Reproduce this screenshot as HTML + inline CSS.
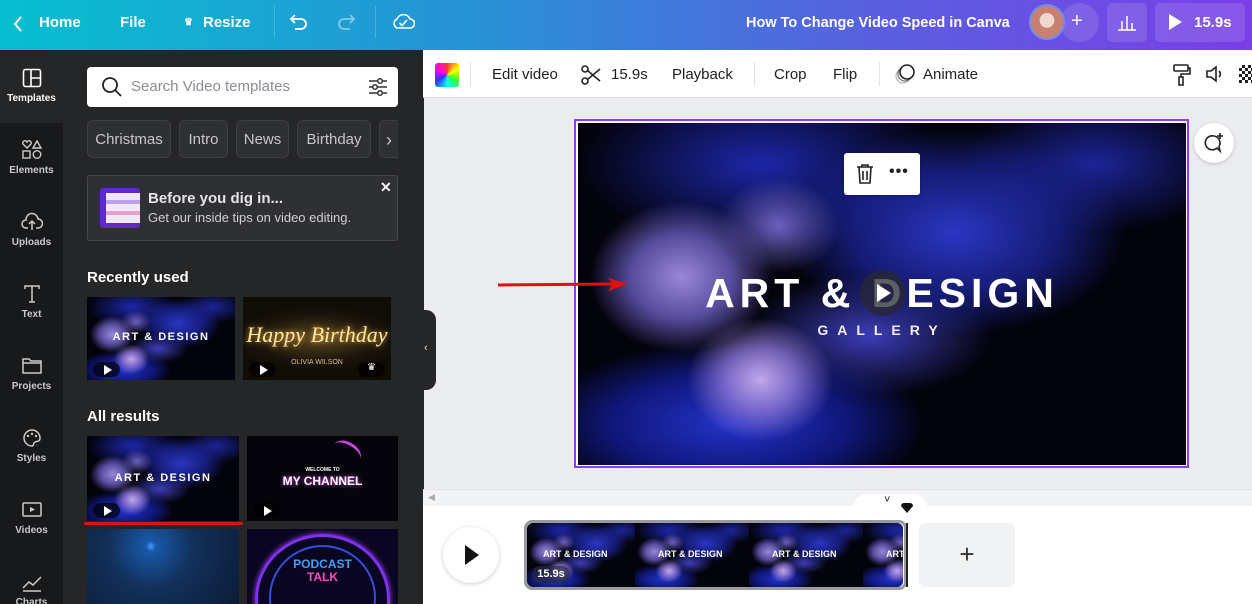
<!DOCTYPE html>
<html><head><meta charset="utf-8"><style>
*{box-sizing:border-box;margin:0;padding:0}
html,body{width:1252px;height:604px;overflow:hidden}
body{font-family:"Liberation Sans",sans-serif;background:#ebecf0;position:relative}
#w{position:absolute;left:0;top:0;width:1252px;height:604px;overflow:hidden}
.a{position:absolute}
.top{left:0;top:0;width:1252px;height:50px;background:linear-gradient(90deg,#06bfcf 0%,#2a8fd6 40%,#5a5fe0 70%,#7a3ee6 100%);color:#fff;font-weight:bold;font-size:15px}
.top span{position:absolute;top:14px}
.smoke{background:
radial-gradient(ellipse 12% 18% at 30% 75%,#c0a8ea 0%,rgba(150,125,220,.75) 50%,transparent 100%),
radial-gradient(ellipse 15% 22% at 17% 45%,#9a88d8 0%,rgba(115,100,205,.75) 55%,transparent 100%),
radial-gradient(ellipse 10% 14% at 33% 30%,#6c60c0 0%,transparent 100%),
radial-gradient(ellipse 28% 30% at 62% 32%,#2a36c4 0%,rgba(30,40,170,.65) 60%,transparent 100%),
radial-gradient(ellipse 32% 24% at 25% 88%,#2232c8 0%,rgba(20,30,160,.75) 60%,transparent 100%),
radial-gradient(ellipse 30% 25% at 30% 12%,#1c26a8 0%,transparent 100%),
radial-gradient(ellipse 22% 20% at 85% 12%,#1c2498 0%,transparent 100%),
radial-gradient(ellipse 20% 18% at 48% 62%,#3c3cb8 0%,transparent 100%),
#03030c}
.rail{left:0;top:50px;width:63px;height:554px;background:#18191b}
.ri{position:absolute;left:0;width:63px;text-align:center;color:#c9cacc;font-size:10px;font-weight:bold}
.ri svg{display:block;margin:0 auto 3px}
.panel{left:63px;top:50px;width:360px;height:554px;background:#252627}
.chip{position:absolute;top:120px;height:38px;border:1px solid #3e3f42;background:#2f3033;border-radius:6px;color:#c6c7c9;font-size:15px;line-height:38px;text-align:center}
.h{position:absolute;color:#fff;font-weight:bold;font-size:15px}
.th{position:absolute;overflow:hidden}
.pb{position:absolute;left:6px;bottom:3px;width:27px;height:15px;border-radius:8px;background:rgba(0,0,0,.7)}
.pb:after{content:"";position:absolute;left:11px;top:3px;border-left:8px solid #fff;border-top:5px solid transparent;border-bottom:5px solid transparent}
.tb{left:423px;top:50px;width:829px;height:48px;background:#fff;border-bottom:1px solid #dcdde0;font-size:15px;color:#1f1f1f}
.tb span{position:absolute;top:16px}
.sep{position:absolute;top:12px;width:1px;height:24px;background:#e0e1e3}
</style></head><body><div id="w">

<div class="a top">
 <svg class="a" style="left:12px;top:14px" width="12" height="20"><path d="M9 3 L3 10 L9 17" stroke="#fff" stroke-width="2" fill="none"/></svg>
 <span style="left:39px">Home</span>
 <span style="left:120px">File</span>
 <span style="left:184px;font-size:10px;top:17px">♛</span>
 <span style="left:203px">Resize</span>
 <div class="a" style="left:274px;top:6px;width:1px;height:32px;background:rgba(255,255,255,.2)"></div>
 <svg class="a" style="left:288px;top:12px" width="22" height="22"><path d="M4 7 H13 A5 5 0 0 1 13 17 H7 M7 3 L3 7 L7 11" stroke="#fff" stroke-width="1.8" fill="none"/></svg>
 <svg class="a" style="left:335px;top:12px" width="22" height="22"><path d="M18 7 H9 A5 5 0 0 0 9 17 H15 M15 3 L19 7 L15 11" stroke="rgba(255,255,255,.45)" stroke-width="1.8" fill="none"/></svg>
 <div class="a" style="left:375px;top:6px;width:1px;height:32px;background:rgba(255,255,255,.2)"></div>
 <svg class="a" style="left:391px;top:10px" width="24" height="22"><path d="M6 18 A5 5 0 0 1 6 9 A7 7 0 0 1 19 9 A4.5 4.5 0 0 1 19 18 Z" stroke="#fff" stroke-width="1.6" fill="none"/><path d="M8.5 13 L11 15.5 L16 10" stroke="#fff" stroke-width="1.6" fill="none"/></svg>
 <span style="left:746px;font-size:14.5px;top:15px">How To Change Video Speed in Canva</span>
 <div class="a" style="left:1060px;top:3px;width:39px;height:39px;border-radius:50%;background:rgba(255,255,255,.12)"></div>
 <div class="a" style="left:1029px;top:4px;width:36px;height:36px;border-radius:50%;background:radial-gradient(circle at 50% 45%,#f0d8cc 0 30%,#c88070 32% 100%);border:2px solid #6f8ff0"></div>
 <span style="left:1071px;top:10px;font-size:20px;font-weight:normal">+</span>
 <div class="a" style="left:1107px;top:3px;width:40px;height:39px;border-radius:5px;background:rgba(255,255,255,.12)"></div>
 <svg class="a" style="left:1116px;top:12px" width="22" height="20"><path d="M2 18 H20 M6 18 V9 M11 18 V4 M16 18 V11" stroke="#fff" stroke-width="1.5"/></svg>
 <div class="a" style="left:1155px;top:3px;width:90px;height:39px;border-radius:5px;background:rgba(255,255,255,.12)"></div>
 <svg class="a" style="left:1167px;top:13px" width="16" height="18"><path d="M2 1 L15 9 L2 17Z" fill="#fff"/></svg>
 <span style="left:1194px">15.9s</span>
</div>

<div class="a rail"></div>
<div class="a" style="left:0;top:50px;width:63px;height:73px;background:#252627"></div>
<div class="a" style="left:0;top:123px;width:63px;height:30px;background:#18191b;border-top-right-radius:8px"></div>
<div class="ri" style="top:68px;color:#fff"><svg width="20" height="20"><rect x="1.5" y="1.5" width="17" height="17" rx="2" stroke="#fff" stroke-width="1.6" fill="none"/><path d="M9 2 V18 M9 10 H18" stroke="#fff" stroke-width="1.6"/></svg><div style="margin-top:5px">Templates</div></div>
<div class="ri" style="top:140px"><svg width="22" height="20"><path d="M6 8 L2 4 A2 2 0 0 1 6 2 A2 2 0 0 1 10 4Z" stroke="#ccc" stroke-width="1.4" fill="none"/><path d="M16 1 L20 8 H12Z" stroke="#ccc" stroke-width="1.4" fill="none"/><rect x="2" y="11" width="7" height="7" stroke="#ccc" stroke-width="1.4" fill="none"/><circle cx="16" cy="14.5" r="3.8" stroke="#ccc" stroke-width="1.4" fill="none"/></svg><div style="margin-top:5px">Elements</div></div>
<div class="ri" style="top:212px"><svg width="22" height="20"><path d="M7 16 H5 A4 4 0 0 1 5 8 A6 6 0 0 1 17 7 A4.5 4.5 0 0 1 17 16 H15 M11 18 V9 M8 12 L11 9 L14 12" stroke="#ccc" stroke-width="1.5" fill="none"/></svg><div style="margin-top:5px">Uploads</div></div>
<div class="ri" style="top:284px"><svg width="20" height="20"><path d="M3 5 V2 H17 V5 M10 2 V18 M7 18 H13" stroke="#ccc" stroke-width="1.5" fill="none"/></svg><div style="margin-top:5px">Text</div></div>
<div class="ri" style="top:356px"><svg width="22" height="20"><path d="M2 3 H8 L10 5 H20 V17 H2Z M2 7 H20" stroke="#ccc" stroke-width="1.5" fill="none"/></svg><div style="margin-top:5px">Projects</div></div>
<div class="ri" style="top:428px"><svg width="22" height="20"><path d="M11 2 A8 8 0 1 0 11 18 C13 18 12 15 14 14 C16 13 19 14 19 10 A8 8 0 0 0 11 2Z" stroke="#ccc" stroke-width="1.5" fill="none"/><circle cx="7" cy="8" r="1.2" fill="#ccc"/><circle cx="11" cy="6" r="1.2" fill="#ccc"/><circle cx="15" cy="8" r="1.2" fill="#ccc"/></svg><div style="margin-top:5px">Styles</div></div>
<div class="ri" style="top:500px"><svg width="22" height="20"><rect x="2" y="3" width="18" height="13" rx="1" stroke="#ccc" stroke-width="1.5" fill="none"/><path d="M9 7 L14 9.5 L9 12Z" fill="#ccc"/></svg><div style="margin-top:5px">Videos</div></div>
<div class="ri" style="top:572px"><svg width="22" height="20"><path d="M2 16 L8 10 L12 13 L20 5 M2 19 H20" stroke="#ccc" stroke-width="1.5" fill="none"/></svg><div style="margin-top:5px">Charts</div></div>

<div class="a panel"></div>
<div class="a" style="left:87px;top:67px;width:311px;height:40px;background:#fff;border-radius:4px"></div>
<svg class="a" style="left:101px;top:76px" width="22" height="22"><circle cx="9" cy="9" r="7" stroke="#222" stroke-width="1.8" fill="none"/><path d="M14 14 L20 20" stroke="#222" stroke-width="1.8"/></svg>
<div class="a" style="left:131px;top:78px;font-size:15px;color:#8a8c94">Search Video templates</div>
<svg class="a" style="left:367px;top:76px" width="22" height="22"><path d="M2 5 H20 M2 11 H20 M2 17 H20" stroke="#333" stroke-width="1.5"/><circle cx="13" cy="5" r="2.3" fill="#fff" stroke="#333" stroke-width="1.5"/><circle cx="8" cy="11" r="2.3" fill="#fff" stroke="#333" stroke-width="1.5"/><circle cx="13" cy="17" r="2.3" fill="#fff" stroke="#333" stroke-width="1.5"/></svg>
<div class="chip" style="left:87px;width:84px">Christmas</div>
<div class="chip" style="left:179px;width:49px">Intro</div>
<div class="chip" style="left:236px;width:53px">News</div>
<div class="chip" style="left:297px;width:74px">Birthday</div>
<div class="chip" style="left:379px;width:19px;border-right:none;border-radius:6px 0 0 6px;font-size:18px">›</div>

<div class="a" style="left:87px;top:175px;width:311px;height:66px;background:#2f3033;border:1px solid #47484b;border-radius:3px"></div>
<div class="a" style="left:100px;top:188px;width:40px;height:40px;background:#5b2bc4;border-radius:3px"></div>
<div class="a" style="left:106px;top:193px;width:34px;height:30px;background:#efe8ff"></div>
<div class="a" style="left:106px;top:200px;width:34px;height:4px;background:#b9a3f0"></div>
<div class="a" style="left:106px;top:211px;width:34px;height:4px;background:#e7a0c8"></div>
<div class="a" style="left:148px;top:190px;color:#e5e5e6;font-weight:bold;font-size:15px">Before you dig in...</div>
<div class="a" style="left:148px;top:210px;color:#d0d1d3;font-size:13px">Get our inside tips on video editing.</div>
<div class="a" style="left:380px;top:179px;color:#fff;font-size:14px;font-weight:bold">✕</div>

<div class="h" style="left:87px;top:269px">Recently used</div>
<div class="th smoke" style="left:87px;top:297px;width:148px;height:83px"><div class="a" style="left:0;width:148px;top:34px;text-align:center;color:#fff;font-size:11px;font-weight:bold;letter-spacing:1.5px">ART &amp; DESIGN</div><div class="pb"></div></div>
<div class="th" style="left:243px;top:297px;width:148px;height:83px;background:radial-gradient(ellipse 60% 40% at 50% 50%,#5a4620 0%,#1a140a 70%,#100c06 100%)"><div class="a" style="left:0;width:148px;top:25px;text-align:center;color:#ffe7a0;font-family:'Liberation Serif',serif;font-style:italic;font-size:22px;text-shadow:0 0 6px #f0b040">Happy Birthday</div><div class="a" style="left:0;width:148px;top:62px;text-align:center;color:#d8c080;font-size:7px">OLIVIA WILSON</div><div class="pb"></div><div class="a" style="right:6px;bottom:3px;width:27px;height:15px;border-radius:8px;background:rgba(0,0,0,.7);color:#fff;font-size:10px;text-align:center">♛</div></div>

<div class="h" style="left:87px;top:408px">All results</div>
<div class="th smoke" style="left:87px;top:436px;width:152px;height:85px"><div class="a" style="left:0;width:152px;top:36px;text-align:center;color:#fff;font-size:11px;font-weight:bold;letter-spacing:1.5px">ART &amp; DESIGN</div><div class="pb"></div></div>
<div class="th" style="left:247px;top:436px;width:151px;height:85px;background:#05040a"><div class="a" style="left:0;width:151px;top:31px;text-align:center;color:#fff;font-size:5px;font-weight:bold">WELCOME TO</div><div class="a" style="left:0;width:151px;top:38px;text-align:center;color:#fff;font-size:12px;font-weight:bold;text-shadow:0 0 4px #e040f0">MY CHANNEL</div><div class="a" style="left:85px;top:6px;width:30px;height:20px;border-top:3px solid #d040e0;border-radius:50%;transform:rotate(30deg)"></div><div class="pb"></div></div>
<div class="a" style="left:84px;top:522px;width:159px;height:3px;background:#e01010;border-radius:2px"></div>
<div class="th" style="left:87px;top:529px;width:152px;height:75px;background:radial-gradient(circle at 42% 23%,#40a0ff 0,#1858a8 5%,#12305a 40%,#0c1c38 100%)"></div>
<div class="th" style="left:247px;top:529px;width:151px;height:75px;background:#0a0520"><div class="a" style="left:8px;top:5px;width:135px;height:130px;border-radius:50%;border:3px solid #8030f0;box-shadow:0 0 6px #a040ff"></div><div class="a" style="left:22px;top:16px;width:107px;height:105px;border-radius:50%;border:2px solid #3050e0"></div><div class="a" style="left:0;width:151px;top:28px;text-align:center;color:#40a0ff;font-size:12px;font-weight:bold">PODCAST</div><div class="a" style="left:0;width:151px;top:41px;text-align:center;color:#f050c0;font-size:12px;font-weight:bold">TALK</div></div>

<div class="a" style="left:422px;top:50px;width:2px;height:554px;background:#252627"></div>
<div class="a" style="left:422px;top:310px;width:14px;height:80px;background:#252627;border-radius:0 10px 10px 0"></div>
<div class="a" style="left:424px;top:342px;color:#ddd;font-size:11px">‹</div>

<div class="a tb">
 <div class="a" style="left:12px;top:13px;width:24px;height:24px;border-radius:3px;background:conic-gradient(from 0deg,#f33,#ff0,#3f3,#0ff,#33f,#f0f,#f33)"></div>
 <div class="sep" style="left:47px"></div>
 <span style="left:69px">Edit video</span>
 <svg class="a" style="left:157px;top:14px" width="22" height="22"><circle cx="5" cy="5" r="3" stroke="#222" stroke-width="1.6" fill="none"/><circle cx="5" cy="17" r="3" stroke="#222" stroke-width="1.6" fill="none"/><path d="M7.5 6.5 L20 17 M7.5 15.5 L20 5" stroke="#222" stroke-width="1.6"/></svg>
 <span style="left:188px">15.9s</span>
 <span style="left:249px">Playback</span>
 <div class="sep" style="left:331px"></div>
 <span style="left:351px">Crop</span>
 <span style="left:410px">Flip</span>
 <div class="sep" style="left:456px"></div>
 <svg class="a" style="left:470px;top:13px" width="24" height="24"><circle cx="10" cy="13" r="7" stroke="#bbb" stroke-width="1.3" fill="none"/><circle cx="12" cy="11" r="7" stroke="#777" stroke-width="1.3" fill="none"/><circle cx="14" cy="9" r="7" fill="#fff" stroke="#222" stroke-width="1.6"/></svg>
 <span style="left:500px">Animate</span>
 <svg class="a" style="left:749px;top:13px" width="20" height="24"><rect x="2" y="2" width="14" height="6" rx="1" stroke="#222" stroke-width="1.6" fill="none"/><path d="M16 5 H18 V11 H9 V14 M7 14 H11 V22 H7Z" stroke="#222" stroke-width="1.6" fill="none"/></svg>
 <svg class="a" style="left:782px;top:14px" width="22" height="20"><path d="M2 7 H6 L11 3 V17 L6 13 H2Z" stroke="#222" stroke-width="1.6" fill="none"/><path d="M14 7 A4 4 0 0 1 14 13" stroke="#222" stroke-width="1.6" fill="none"/></svg>
 <div class="a" style="left:816px;top:15px;width:13px;height:18px;background:repeating-conic-gradient(#222 0 25%,#fff 0 50%) 0 0/6px 6px"></div>
</div>

<div class="a" style="left:574px;top:119px;width:615px;height:349px;border:2px solid #8b3dff;background:#fff"></div>
<div class="a smoke" style="left:578px;top:123px;width:608px;height:342px"></div>
<div class="a" style="left:578px;top:270px;width:608px;text-align:center;color:#fff;font-weight:bold;font-size:41px;letter-spacing:5px">ART &amp; DESIGN</div>
<div class="a" style="left:578px;top:322px;width:608px;text-align:center;color:#eee;font-weight:bold;font-size:14px;letter-spacing:9px">GALLERY</div>
<div class="a" style="left:860px;top:270px;width:46px;height:46px;border-radius:50%;background:rgba(40,40,50,.75)"></div>
<svg class="a" style="left:875px;top:283px" width="18" height="20"><path d="M2 1 L16 10 L2 19Z" fill="#fff"/></svg>
<div class="a" style="left:844px;top:153px;width:76px;height:42px;background:#fff;border-radius:3px;box-shadow:0 1px 3px rgba(0,0,0,.2)"></div>
<svg class="a" style="left:855px;top:163px" width="20" height="22"><path d="M2 4 H18 M7 4 V2 H13 V4 M4 4 L5 20 H15 L16 4 M8 8 V17 M12 8 V17" stroke="#222" stroke-width="1.6" fill="none"/></svg>
<div class="a" style="left:889px;top:163px;font-size:16px;font-weight:bold;color:#222;letter-spacing:1px">•••</div>
<div class="a" style="left:1194px;top:123px;width:40px;height:40px;border-radius:50%;background:#fff;box-shadow:0 1px 3px rgba(0,0,0,.2)"></div>
<svg class="a" style="left:1202px;top:131px" width="24" height="24"><path d="M12 5 A7 7 0 1 0 15 17 L18 20 L17 15.5 A7 7 0 0 0 12 5" stroke="#222" stroke-width="1.6" fill="none"/><path d="M18 2 V8 M15 5 H21" stroke="#222" stroke-width="1.6"/></svg>

<svg class="a" style="left:496px;top:275px" width="136" height="20"><path d="M2 10 L118 9" stroke="#e31010" stroke-width="3"/><path d="M112 3 L132 9 L112 16 L117 9Z" fill="#e31010"/></svg>

<div class="a" style="left:423px;top:489px;width:829px;height:18px;background:#f2f3f5;border-top:1px solid #e2e3e6"></div>
<div class="a" style="left:428px;top:492px;color:#aaa;font-size:9px">◀</div>
<div class="a" style="left:423px;top:506px;width:829px;height:98px;background:#fff"></div>
<div class="a" style="left:853px;top:494px;width:74px;height:20px;background:#fff;border-radius:14px 14px 0 0"></div>
<div class="a" style="left:884px;top:494px;font-size:11px;color:#222">˅</div>
<svg class="a" style="left:900px;top:503px" width="14" height="11"><path d="M1 3 A3 3 0 0 1 4 0 H10 A3 3 0 0 1 13 3 L7 10Z" fill="#111"/></svg>
<div class="a" style="left:443px;top:527px;width:56px;height:56px;border-radius:50%;background:#fff;box-shadow:0 1px 4px rgba(0,0,0,.2)"></div>
<svg class="a" style="left:463px;top:544px" width="18" height="22"><path d="M2 1 L16 11 L2 21Z" fill="#111"/></svg>
<div class="a" style="left:524px;top:520px;width:383px;height:70px;border:3px solid #9a9ba0;border-radius:8px;background:#fff"></div>
<div class="a" style="left:527px;top:523px;width:376px;height:64px;border-radius:6px;overflow:hidden">
 <div class="a smoke" style="left:0;top:0;width:112px;height:64px"></div>
 <div class="a smoke" style="left:108px;top:0;width:114px;height:64px"></div>
 <div class="a smoke" style="left:222px;top:0;width:114px;height:64px"></div>
 <div class="a smoke" style="left:336px;top:0;width:114px;height:64px"></div>
 <div class="a" style="left:16px;top:26px;color:#fff;font-size:9px;font-weight:bold">ART &amp; DESIGN</div>
 <div class="a" style="left:131px;top:26px;color:#fff;font-size:9px;font-weight:bold">ART &amp; DESIGN</div>
 <div class="a" style="left:245px;top:26px;color:#fff;font-size:9px;font-weight:bold">ART &amp; DESIGN</div>
 <div class="a" style="left:359px;top:26px;color:#fff;font-size:9px;font-weight:bold">ART</div>
 <div class="a" style="left:5px;top:43px;width:38px;height:17px;border-radius:8px;background:rgba(40,40,60,.7);color:#fff;font-size:11px;font-weight:bold;text-align:center;line-height:17px">15.9s</div>
</div>
<div class="a" style="left:906px;top:523px;width:2px;height:64px;background:#222"></div>
<div class="a" style="left:919px;top:523px;width:96px;height:64px;background:#f1f2f4;border-radius:6px;text-align:center;line-height:62px;font-size:26px;color:#333">+</div>
</div></body></html>
